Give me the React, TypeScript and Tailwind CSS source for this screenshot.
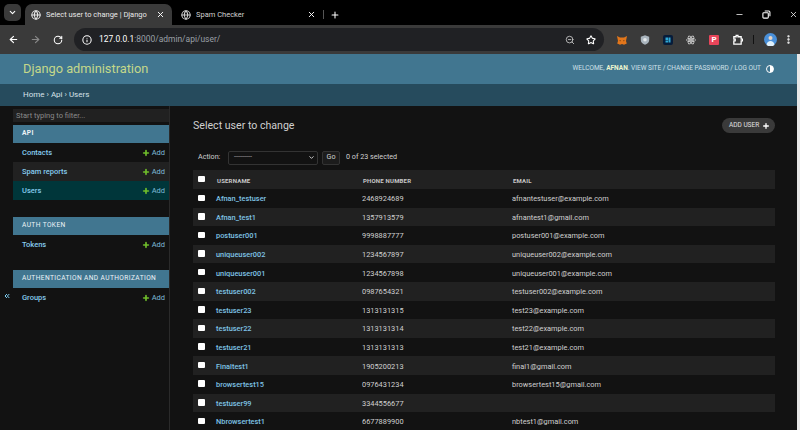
import { ArrowLeft, ArrowRight, ChevronDown, ChevronsLeft, Ellipsis, Globe, Info, Minus, Plus, RotateCw, Star, X, ZoomOut } from 'lucide-react'

const users = [
  ['Afnan_testuser', '2468924689', 'afnantestuser@example.com'],
  ['Afnan_test1', '1357913579', 'afnantest1@gmail.com'],
  ['postuser001', '9998887777', 'postuser001@example.com'],
  ['uniqueuser002', '1234567897', 'uniqueuser002@example.com'],
  ['uniqueuser001', '1234567898', 'uniqueuser001@example.com'],
  ['testuser002', '0987654321', 'testuser002@example.com'],
  ['testuser23', '1313131315', 'test23@example.com'],
  ['testuser22', '1313131314', 'test22@example.com'],
  ['testuser21', '1313131313', 'test21@example.com'],
  ['Finaltest1', '1905200213', 'final1@gmail.com'],
  ['browsertest15', '0976431234', 'browsertest15@gmail.com'],
  ['testuser99', '3344556677', ''],
  ['Nbrowsertest1', '6677889900', 'nbtest1@gmail.com'],
]

function Tab({ title, active }: { title: string; active?: boolean }) {
  return (
    <div className={`flex h-[21px] items-center ${active ? 'w-[147px] rounded-t-[7px] bg-[#3a3a3a] pl-[6px] pr-[7px] text-[#e8e8e8]' : 'ml-[5px] w-[140px] pl-[4px] pr-[1px] text-[#d0d0d0]'}`}>
      <Globe className="h-[10px] w-[10px] shrink-0" strokeWidth={2.5} />
      <span className="ml-[5px] flex-1 truncate text-[7.5px]">{title}</span>
      <X className="h-[9px] w-[9px] shrink-0 text-white" strokeWidth={2.5} />
    </div>
  )
}

function ModuleHeader({ title, bold }: { title: string; bold?: boolean }) {
  return (
    <div className={`flex h-[18px] items-center bg-[#417690] pl-[9px] text-[6.6px] tracking-[0.4px] text-[#eef4f7] ${bold ? 'font-bold' : ''}`}>
      {title}
    </div>
  )
}

function ModuleRow({ name, tone }: { name: string; tone?: string }) {
  return (
    <div className={`flex h-[19px] items-center justify-between pl-[9px] pr-[4px] text-[7.5px] ${tone ?? ''}`}>
      <span className="font-medium text-[#85cbee]">{name}</span>
      <span className="flex items-center text-[#7fbcd9]">
        <Plus className="mr-[2px] h-[8px] w-[8px] text-[#70bf2b]" strokeWidth={5} />
        Add
      </span>
    </div>
  )
}

function Checkbox() {
  return <span className="mb-[2px] block h-[6.5px] w-[6.5px] rounded-[1px] bg-white" />
}

export default function App() {
  return (
    <div className="flex h-[430px] w-[800px] flex-col overflow-hidden bg-[#121212] font-['Roboto',sans-serif]">
      {/* browser chrome */}
      <div className="flex h-[25px] items-end bg-black pl-[4px]">
        <div className="mb-[4px] mr-[4px] flex h-[17px] w-[17px] items-center justify-center rounded-[5px] bg-[#3a3a3a]">
          <ChevronDown className="h-[9px] w-[9px] text-white" strokeWidth={3} />
        </div>
        <Tab title="Select user to change | Django" active />
        <Tab title="Spam Checker" />
        <span className="mb-[6px] ml-[6px] h-[9px] w-px bg-[#555]" />
        <Plus className="mb-[5px] ml-[6px] h-[10px] w-[10px] text-white" strokeWidth={2.5} />
        <div className="ml-auto mb-[6px] flex items-center gap-[18px] pr-[2px] text-white">
          <Minus className="h-[9px] w-[9px]" />
          <svg viewBox="0 0 10 10" className="h-[9px] w-[9px]" fill="none" stroke="#fff" strokeWidth="1.2">
            <rect x="1" y="3" width="6" height="6" rx="1" />
            <path d="M3 1.2h4.5a1.3 1.3 0 0 1 1.3 1.3V7" />
          </svg>
          <X className="h-[9px] w-[9px]" />
        </div>
      </div>
      <div className="flex h-[29px] items-center bg-[#3a3a3a] pl-[8px]">
        <ArrowLeft className="h-[11px] w-[11px] text-white" strokeWidth={2.5} />
        <ArrowRight className="ml-[11px] h-[11px] w-[11px] text-[#888]" strokeWidth={2.5} />
        <RotateCw className="ml-[12px] h-[10px] w-[10px] text-white" strokeWidth={2.5} />
        <div className="ml-[11px] flex h-[23px] w-[530px] items-center rounded-full bg-[#202124] pl-[8px] pr-[8px]">
          <Info className="h-[10px] w-[10px] text-white" strokeWidth={2.5} />
          <span className="ml-[7px] flex-1 text-[8.45px] text-[#9aa0a6]">
            <span className="text-white">127.0.0.1</span>:8000/admin/api/user/
          </span>
          <ZoomOut className="h-[10px] w-[10px] text-[#ccc]" />
          <Star className="ml-[11px] h-[10px] w-[10px] text-white" strokeWidth={2.5} />
        </div>
        <div className="ml-[13px] flex items-center gap-[13px]">
          {/* extension icons */}
          <svg viewBox="0 0 10 10" className="h-[10px] w-[10px]">
            <path d="M0 1l3 1.5h4L10 1 9 6l.8 2.5L7 9.8 5 9l-2 .8L.2 8.500 1 6z" fill="#e2761b" />
            <path d="M2.500 5l1.500.5-1 1zM7.500 5 6 5.500l1 1z" fill="#6b3a12" />
          </svg>
          <svg viewBox="0 0 10 10" className="h-[10px] w-[10px]">
            <path d="M5 .3 9.200 1.800V5c0 2.500-2 4-4.200 4.800C2.800 9 .8 7.500.8 5V1.800z" fill="#a9b4bd" />
            <circle cx="5" cy="4.800" r="1.800" fill="#e4e8ea" />
          </svg>
          <svg viewBox="0 0 10 10" className="h-[10px] w-[10px]">
            <rect width="10" height="10" rx="2" fill="#071c3a" />
            <path d="M2.500 2.500H5V5H2.500zM5.500 2.500h2V7.500H5.500zM2.500 5.500H5v2H2.500z" fill="#2fa9d6" />
          </svg>
          <svg viewBox="0 0 10 10" className="h-[10px] w-[10px]" fill="none" stroke="#cfcfcf" strokeWidth=".8">
            <ellipse cx="5" cy="5" rx="4.600" ry="1.800" />
            <ellipse cx="5" cy="5" rx="4.600" ry="1.800" transform="rotate(60 5 5)" />
            <ellipse cx="5" cy="5" rx="4.600" ry="1.800" transform="rotate(120 5 5)" />
            <circle cx="5" cy="5" r=".8" fill="#cfcfcf" />
          </svg>
          <span className="flex h-[10px] w-[10px] items-center justify-center rounded-[1px] bg-[#e8455a] text-[8px] font-bold text-white">P</span>
          <svg viewBox="0 0 12 12" className="h-[11px] w-[11px]" fill="none" stroke="#fff" strokeWidth="1.4">
            <path d="M2 3h2.500V1.500h2V3H10v2.500H11.500v2H10V11H2V7.500H3.500v-2H2z" />
          </svg>
        </div>
        <span className="ml-[10px] h-[9px] w-px bg-[#111]" />
        <svg viewBox="0 0 13 13" className="ml-[10px] h-[13px] w-[13px]">
          <circle cx="6.500" cy="6.500" r="6.500" fill="#4a90d9" />
          <circle cx="6.500" cy="5" r="2" fill="#e8d4c4" />
          <path d="M2.500 12c.5-3 2-4 4-4s3.500 1 4 4a6.500 6.500 0 0 1-8 0z" fill="#dff0fb" />
        </svg>
        <Ellipsis className="ml-[6px] h-[11px] w-[11px] rotate-90 text-white" strokeWidth={3} />
      </div>

      {/* page */}
      <div className="flex min-h-0 flex-1">
        <div className="flex min-w-0 flex-1 flex-col">
          <header className="flex h-[30px] items-center justify-between bg-[#417690] pl-[23px] pr-[23px]">
            <span className="text-[12.8px] text-[#c4d88a]">Django administration</span>
            <div className="flex items-center text-[6.5px] text-[#cfe0e8]">
              <span>WELCOME,&nbsp;</span>
              <span className="font-bold text-[#eef5cf]">AFNAN</span>
              <span>.&nbsp;VIEW SITE / CHANGE PASSWORD / LOG OUT</span>
              <span className="ml-[5px] block h-[8px] w-[8px] rounded-full border border-white bg-[linear-gradient(90deg,transparent_50%,#fff_50%)]" />
            </div>
          </header>
          <div className="flex h-[22px] items-center bg-[#264b5d] pl-[23px] text-[8px] text-[#d6e2e8]">
            Home › Api › Users
          </div>
          <div className="flex min-h-0 flex-1">
            <div className="flex w-[13px] shrink-0 items-center justify-center pt-[56px] text-[#81d4fa]">
              <ChevronsLeft className="h-[8px] w-[8px]" strokeWidth={3} />
            </div>
            <aside className="w-[157px] shrink-0 border-r border-[#2a2a2a] pt-[3px]">
              <div className="flex h-[13px] items-center bg-[#212121] pl-[3px] text-[7.5px] text-[#8a8a8a]">Start typing to filter...</div>
              <div className="mt-[3px]">
                <ModuleHeader title="API" bold />
                <ModuleRow name="Contacts" />
                <ModuleRow name="Spam reports" tone="bg-[#212121]" />
                <ModuleRow name="Users" tone="bg-[#00363a]" />
              </div>
              <div className="mt-[17px]">
                <ModuleHeader title="AUTH TOKEN" />
                <ModuleRow name="Tokens" />
              </div>
              <div className="mt-[16px]">
                <ModuleHeader title="AUTHENTICATION AND AUTHORIZATION" />
                <ModuleRow name="Groups" />
              </div>
            </aside>
            <main className="min-w-0 flex-1 pl-[23px] pr-[22px]">
              <div className="flex h-[39px] items-center justify-between">
                <h1 className="mt-[1px] text-[10.6px] text-[#d0d0d0]">Select user to change</h1>
                <div className="flex h-[15px] w-[53px] items-center justify-between rounded-full bg-[#3a3a3a] pl-[7px] pr-[5px] text-[6.5px] text-[#e0e0e0]">
                  ADD USER
                  <Plus className="h-[8px] w-[8px] text-white" strokeWidth={4} />
                </div>
              </div>
              <div className="mt-[3px] flex h-[19px] items-center text-[7.2px] text-[#d0d0d0]">
                <span className="ml-[5px] w-[30px]">Action:</span>
                <div className="flex h-[14px] w-[90px] items-center justify-between rounded-[2px] border border-[#333] bg-[#121212] pl-[5px] pr-[2px] text-[#aaa]">
                  ---------
                  <ChevronDown className="h-[7px] w-[7px] text-[#ddd]" strokeWidth={3} />
                </div>
                <div className="ml-[4px] flex h-[14px] w-[18px] items-center justify-center rounded-[2px] border border-[#333] bg-[#1c1c1c]">Go</div>
                <span className="ml-[6px]">0 of 23 selected</span>
              </div>
              <div className="mt-[3px] flex h-[19px] items-center bg-[#212121] pt-[1px] text-[6px] font-bold tracking-[0.2px] text-[#c8c8c8]">
                <div className="w-[24px] pl-[5px]"><Checkbox /></div>
                <div className="w-[146px]">USERNAME</div>
                <div className="w-[150px]">PHONE NUMBER</div>
                <div>EMAIL</div>
              </div>
              {users.map(([name, phone, email], i) => (
                <div key={name} className={`flex h-[18.6px] items-center pt-[1px] text-[7.4px] ${i % 2 === 1 ? 'bg-[#212121]' : ''}`}>
                  <div className="w-[23px] pl-[5px]"><Checkbox /></div>
                  <div className="w-[146px] font-medium text-[#7fc4e6]">{name}</div>
                  <div className="w-[150px] text-[#d0d0d0]">{phone}</div>
                  <div className="text-[#d0d0d0]">{email}</div>
                </div>
              ))}
            </main>
          </div>
        </div>
        <div className="w-[3px] shrink-0 bg-[#e8e8e8]" />
      </div>
    </div>
  )
}
